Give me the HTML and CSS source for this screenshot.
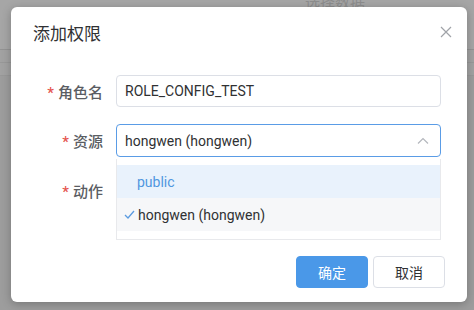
FILE: index.html
```html
<!DOCTYPE html>
<html lang="zh-CN">
  <head>
    <meta charset="UTF-8" />
    <meta name="viewport" content="width=device-width, initial-scale=1.0" />
    <title>添加权限</title>
    <link rel="stylesheet" href="styles.css">
  </head>
  <body>
    <div class="page">
      <div class="page-top"><span class="page-action">选择数据</span></div>
      <div class="page-row"></div>
      <div class="page-row"></div>
    </div>

    <div class="dialog">
      <div class="dialog-header">
        <span class="dialog-title">添加权限</span>
        <svg class="dialog-close" width="12" height="12" viewBox="0 0 12 12">
          <path d="M1 1L11 11M11 1L1 11" stroke="#a0a3a8" stroke-width="1.2" fill="none" />
        </svg>
      </div>

      <form class="dialog-body">
        <div class="form-item">
          <label class="form-label"><i class="star">*</i>角色名</label>
          <div class="form-control">
            <input class="input" type="text" value="ROLE_CONFIG_TEST" />
          </div>
        </div>
        <div class="form-item">
          <label class="form-label"><i class="star">*</i>资源</label>
          <div class="form-control">
            <div class="input select is-open">
              <span>hongwen (hongwen)</span>
              <svg class="select-arrow" width="12" height="8" viewBox="0 0 12 8">
                <path d="M1 6.5L6 1.5L11 6.5" stroke="#b4b7bd" stroke-width="1.2" fill="none" />
              </svg>
            </div>
            <ul class="dropdown">
              <li class="option is-hover">public</li>
              <li class="option is-selected">
                <svg class="check" width="11" height="9" viewBox="0 0 11 9">
                  <path d="M1 5L4 8L10 1" stroke="#5b9be0" stroke-width="1.3" fill="none" />
                </svg>hongwen (hongwen)
              </li>
            </ul>
          </div>
        </div>
        <div class="form-item">
          <label class="form-label"><i class="star">*</i>动作</label>
          <div class="form-control">
            <div class="input"></div>
          </div>
        </div>
      </form>

      <div class="dialog-footer">
        <button class="btn btn-primary" type="button">确定</button>
        <button class="btn" type="button">取消</button>
      </div>
    </div>
  </body>
</html>
```

FILE: styles.css
```css
* {
  box-sizing: border-box;
  margin: 0;
  padding: 0;
}

body {
  width: 474px;
  height: 310px;
  overflow: hidden;
  background-color: #9d9d9d;
  font-family: Roboto, "Noto Sans CJK SC", sans-serif;
  color: #606266;
  position: relative;
}

.page-top {
  height: 50px;
  background-color: #a6a6a6;
  border-bottom: 1px solid #939393;
  position: relative;
}

.page-action {
  position: absolute;
  left: 305px;
  top: -9px;
  font-size: 15px;
  color: #8d8d8d;
}

.page-row {
  height: 13px;
  border-bottom: 1px solid #989898;
  background-color: #a2a2a2;
}

.dialog {
  position: absolute;
  left: 11px;
  top: 7px;
  width: 456px;
  height: 295px;
  background-color: #fff;
  border-radius: 6px;
  box-shadow: 0 2px 10px rgba(0, 0, 0, 0.25);
  padding: 0 22px;
}

.dialog-header {
  display: flex;
  justify-content: space-between;
  align-items: center;
  height: 48px;
  padding-top: 2px;
}

.dialog-title {
  font-size: 17px;
  color: #303133;
}

.dialog-close {
  margin-right: -7px;
  margin-top: -1px;
}

.dialog-body {
  padding-top: 20px;
}

.form-item {
  display: flex;
  align-items: center;
  margin-bottom: 17px;
}

.form-label {
  width: 83px;
  padding-right: 13px;
  text-align: right;
  font-size: 15px;
  font-weight: 500;
  color: #5a5d63;
}

.star {
  font-style: normal;
  color: #e5564f;
  margin-right: 4px;
}

.form-control {
  flex: 1;
  position: relative;
  margin-right: 4px;
}

.input {
  display: flex;
  align-items: center;
  width: 100%;
  height: 32px;
  padding: 0 8px;
  font-family: Roboto, "Noto Sans CJK SC", sans-serif;
  font-size: 14px;
  color: #303133;
  border: 1px solid #dcdfe6;
  border-radius: 4px;
  outline: none;
  background-color: #fff;
}

.select {
  justify-content: space-between;
  height: 33px;
}

.select.is-open {
  border-color: #5a9ce6;
}

.select-arrow {
  margin-right: 3px;
}

.dropdown {
  position: absolute;
  left: 0;
  right: 0;
  top: 35px;
  list-style: none;
  background-color: #fff;
  border: 1px solid #e8e9ec;
  border-top: none;
  padding: 6px 0 8px;
  z-index: 2;
}

.option {
  display: flex;
  align-items: center;
  height: 33px;
  padding-left: 20px;
  font-size: 14px;
  color: #303133;
}

.option.is-hover {
  background-color: #e9f2fc;
  color: #4f97e0;
}

.option.is-selected {
  background-color: #f6f7f9;
  padding-left: 7px;
}

.check {
  margin-right: 3px;
}

.dialog-footer {
  display: flex;
  justify-content: flex-end;
  gap: 5px;
  margin-top: 50px;
}

.btn {
  width: 72px;
  height: 32px;
  font-family: Roboto, "Noto Sans CJK SC", sans-serif;
  font-size: 14px;
  color: #303133;
  background-color: #fff;
  border: 1px solid #dcdfe6;
  border-radius: 4px;
  cursor: pointer;
}

.btn-primary {
  color: #fff;
  background-color: #4a98e8;
  border-color: #4a98e8;
}
```
